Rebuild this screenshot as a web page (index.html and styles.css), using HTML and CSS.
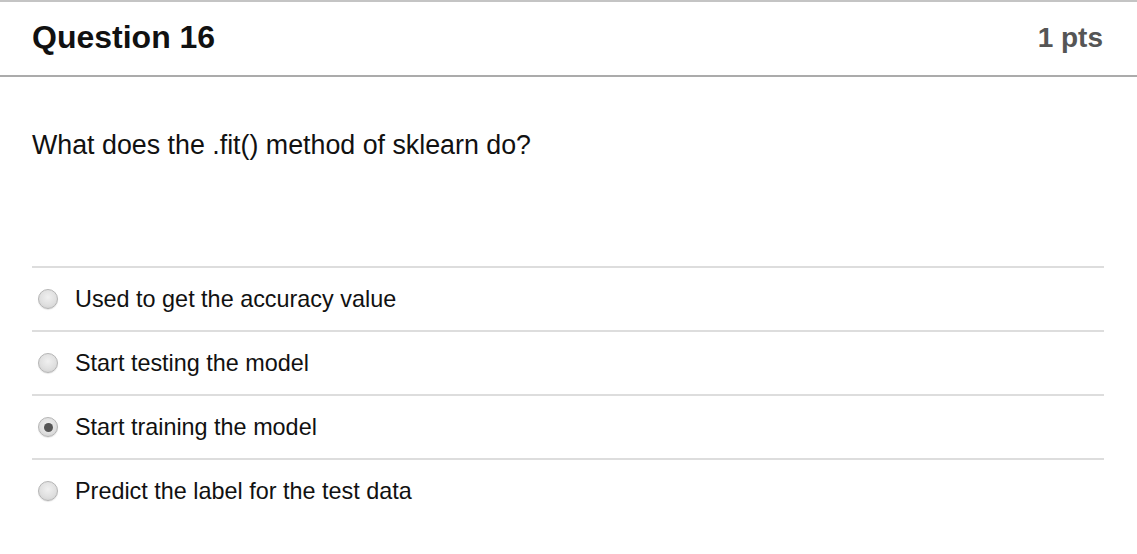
FILE: index.html
```html
<!DOCTYPE html>
<html lang="en">
<head>
<meta charset="utf-8">
<title>Question 16</title>
<link rel="stylesheet" href="styles.css">
</head>
<body>
<div class="question">
  <div class="question-header">
    <h2 class="question-title">Question 16</h2>
    <span class="question-points">1 pts</span>
  </div>
  <div class="question-body">
    <p class="question-text">What does the .fit() method of sklearn do?</p>
    <div class="answers">
      <label class="answer">
        <span class="radio"></span>
        <span class="answer-text">Used to get the accuracy value</span>
      </label>
      <label class="answer">
        <span class="radio"></span>
        <span class="answer-text">Start testing the model</span>
      </label>
      <label class="answer">
        <span class="radio radio-checked"></span>
        <span class="answer-text">Start training the model</span>
      </label>
      <label class="answer">
        <span class="radio"></span>
        <span class="answer-text">Predict the label for the test data</span>
      </label>
    </div>
  </div>
</div>
</body>
</html>
```

FILE: styles.css
```css
html, body {
  margin: 0;
  padding: 0;
  background: #ffffff;
}

body {
  font-family: "Liberation Sans", Arial, sans-serif;
  color: #111111;
}

.question {
  border-top: 2px solid #c4c4c4;
}

.question-header {
  height: 73px;
  box-sizing: border-box;
  display: flex;
  align-items: center;
  justify-content: space-between;
  padding: 0 34px 4px 32px;
  border-bottom: 2px solid #ababab;
  height: 75px;
}

.question-title {
  margin: 0;
  font-size: 32px;
  font-weight: bold;
  color: #111111;
  line-height: 36px;
}

.question-points {
  font-size: 28px;
  font-weight: bold;
  color: #555555;
  line-height: 36px;
  padding-top: 2px;
}

.question-body {
  padding: 52px 33px 0 32px;
}

.question-text {
  margin: 0;
  font-size: 26.8px;
  line-height: 32px;
  color: #111111;
}

.answers {
  margin-top: 105px;
  display: flex;
  flex-direction: column;
}

.answer {
  height: 62px;
  border-top: 2px solid #dddddd;
  display: flex;
  align-items: center;
  gap: 17px;
  padding-left: 6px;
}

.radio {
  width: 20px;
  height: 20px;
  box-sizing: border-box;
  border-radius: 50%;
  border: 1px solid #b5b5b5;
  background: radial-gradient(circle at 50% 40%, #f0f0f0 0%, #e0e0e0 55%, #cbcbcb 100%);
  box-shadow: 0 1px 1px rgba(0, 0, 0, 0.1);
  display: flex;
  align-items: center;
  justify-content: center;
  flex: none;
}

.radio-checked::after {
  content: "";
  width: 9px;
  height: 9px;
  border-radius: 50%;
  background: #555555;
}

.answer-text {
  font-size: 23.4px;
  line-height: 28px;
  color: #111111;
}
```
